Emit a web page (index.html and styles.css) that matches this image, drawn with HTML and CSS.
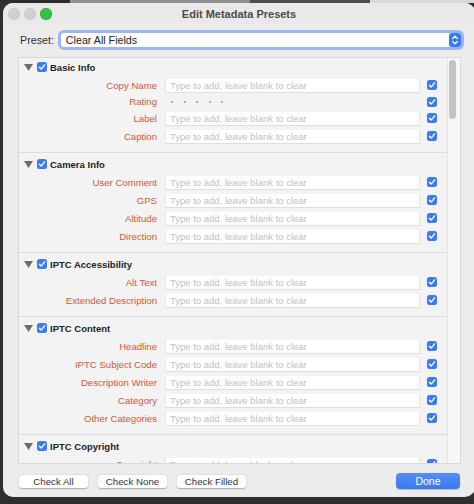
FILE: index.html
```html
<!DOCTYPE html>
<html>
<head>
<meta charset="utf-8">
<link rel="stylesheet" href="styles.css">
</head>
<body>
<div class="window">
  <div class="titlebar">
    <div class="lights"><span class="light"></span><span class="light"></span><span class="light green"></span></div>
    <div class="title">Edit Metadata Presets</div>
  </div>
  <div class="preset-row">
    <span class="preset-label">Preset:</span>
    <div class="select">
      <span class="select-text">Clear All Fields</span>
      <svg class="stepper" width="12" height="14" viewBox="0 0 12 14"><rect width="12" height="14" rx="3" fill="#3a7bf2"/><path d="M3.6 5.6 L6 3.2 L8.4 5.6 M3.6 8.4 L6 10.8 L8.4 8.4" fill="none" stroke="#fff" stroke-width="1.3" stroke-linecap="round" stroke-linejoin="round"/></svg>
    </div>
  </div>
  <div class="scrollview">
    <div class="sections">
      <div class="section first">
        <div class="sec-head"><svg class="tri" width="9" height="7" viewBox="0 0 9 7"><polygon points="0,0 9,0 4.5,7" fill="#6d6d6d"/></svg><svg class="cb" width="10" height="10" viewBox="0 0 10 10"><rect width="10" height="10" rx="2.5" fill="#3a7bf2"/><path d="M2.4 5.2 L4.2 7.1 L7.6 2.9" fill="none" stroke="#fff" stroke-width="1.4" stroke-linecap="round" stroke-linejoin="round"/></svg><span class="sec-title">Basic Info</span></div>
        <div class="row"><span class="lbl">Copy Name</span><input class="field" placeholder="Type to add, leave blank to clear"><svg class="cb" width="10" height="10" viewBox="0 0 10 10"><rect width="10" height="10" rx="2.5" fill="#3a7bf2"/><path d="M2.4 5.2 L4.2 7.1 L7.6 2.9" fill="none" stroke="#fff" stroke-width="1.4" stroke-linecap="round" stroke-linejoin="round"/></svg></div>
        <div class="row rating"><span class="lbl">Rating</span><div class="dots"><i></i><i></i><i></i><i></i><i></i></div><svg class="cb" width="10" height="10" viewBox="0 0 10 10"><rect width="10" height="10" rx="2.5" fill="#3a7bf2"/><path d="M2.4 5.2 L4.2 7.1 L7.6 2.9" fill="none" stroke="#fff" stroke-width="1.4" stroke-linecap="round" stroke-linejoin="round"/></svg></div>
        <div class="row"><span class="lbl">Label</span><input class="field" placeholder="Type to add, leave blank to clear"><svg class="cb" width="10" height="10" viewBox="0 0 10 10"><rect width="10" height="10" rx="2.5" fill="#3a7bf2"/><path d="M2.4 5.2 L4.2 7.1 L7.6 2.9" fill="none" stroke="#fff" stroke-width="1.4" stroke-linecap="round" stroke-linejoin="round"/></svg></div>
        <div class="row"><span class="lbl">Caption</span><input class="field" placeholder="Type to add, leave blank to clear"><svg class="cb" width="10" height="10" viewBox="0 0 10 10"><rect width="10" height="10" rx="2.5" fill="#3a7bf2"/><path d="M2.4 5.2 L4.2 7.1 L7.6 2.9" fill="none" stroke="#fff" stroke-width="1.4" stroke-linecap="round" stroke-linejoin="round"/></svg></div>
      </div>
      <div class="section">
        <div class="sec-head"><svg class="tri" width="9" height="7" viewBox="0 0 9 7"><polygon points="0,0 9,0 4.5,7" fill="#6d6d6d"/></svg><svg class="cb" width="10" height="10" viewBox="0 0 10 10"><rect width="10" height="10" rx="2.5" fill="#3a7bf2"/><path d="M2.4 5.2 L4.2 7.1 L7.6 2.9" fill="none" stroke="#fff" stroke-width="1.4" stroke-linecap="round" stroke-linejoin="round"/></svg><span class="sec-title">Camera Info</span></div>
        <div class="row"><span class="lbl">User Comment</span><input class="field" placeholder="Type to add, leave blank to clear"><svg class="cb" width="10" height="10" viewBox="0 0 10 10"><rect width="10" height="10" rx="2.5" fill="#3a7bf2"/><path d="M2.4 5.2 L4.2 7.1 L7.6 2.9" fill="none" stroke="#fff" stroke-width="1.4" stroke-linecap="round" stroke-linejoin="round"/></svg></div>
        <div class="row"><span class="lbl">GPS</span><input class="field" placeholder="Type to add, leave blank to clear"><svg class="cb" width="10" height="10" viewBox="0 0 10 10"><rect width="10" height="10" rx="2.5" fill="#3a7bf2"/><path d="M2.4 5.2 L4.2 7.1 L7.6 2.9" fill="none" stroke="#fff" stroke-width="1.4" stroke-linecap="round" stroke-linejoin="round"/></svg></div>
        <div class="row"><span class="lbl">Altitude</span><input class="field" placeholder="Type to add, leave blank to clear"><svg class="cb" width="10" height="10" viewBox="0 0 10 10"><rect width="10" height="10" rx="2.5" fill="#3a7bf2"/><path d="M2.4 5.2 L4.2 7.1 L7.6 2.9" fill="none" stroke="#fff" stroke-width="1.4" stroke-linecap="round" stroke-linejoin="round"/></svg></div>
        <div class="row"><span class="lbl">Direction</span><input class="field" placeholder="Type to add, leave blank to clear"><svg class="cb" width="10" height="10" viewBox="0 0 10 10"><rect width="10" height="10" rx="2.5" fill="#3a7bf2"/><path d="M2.4 5.2 L4.2 7.1 L7.6 2.9" fill="none" stroke="#fff" stroke-width="1.4" stroke-linecap="round" stroke-linejoin="round"/></svg></div>
      </div>
      <div class="section">
        <div class="sec-head"><svg class="tri" width="9" height="7" viewBox="0 0 9 7"><polygon points="0,0 9,0 4.5,7" fill="#6d6d6d"/></svg><svg class="cb" width="10" height="10" viewBox="0 0 10 10"><rect width="10" height="10" rx="2.5" fill="#3a7bf2"/><path d="M2.4 5.2 L4.2 7.1 L7.6 2.9" fill="none" stroke="#fff" stroke-width="1.4" stroke-linecap="round" stroke-linejoin="round"/></svg><span class="sec-title">IPTC Accessibility</span></div>
        <div class="row"><span class="lbl">Alt Text</span><input class="field" placeholder="Type to add, leave blank to clear"><svg class="cb" width="10" height="10" viewBox="0 0 10 10"><rect width="10" height="10" rx="2.5" fill="#3a7bf2"/><path d="M2.4 5.2 L4.2 7.1 L7.6 2.9" fill="none" stroke="#fff" stroke-width="1.4" stroke-linecap="round" stroke-linejoin="round"/></svg></div>
        <div class="row"><span class="lbl">Extended Description</span><input class="field" placeholder="Type to add, leave blank to clear"><svg class="cb" width="10" height="10" viewBox="0 0 10 10"><rect width="10" height="10" rx="2.5" fill="#3a7bf2"/><path d="M2.4 5.2 L4.2 7.1 L7.6 2.9" fill="none" stroke="#fff" stroke-width="1.4" stroke-linecap="round" stroke-linejoin="round"/></svg></div>
      </div>
      <div class="section">
        <div class="sec-head"><svg class="tri" width="9" height="7" viewBox="0 0 9 7"><polygon points="0,0 9,0 4.5,7" fill="#6d6d6d"/></svg><svg class="cb" width="10" height="10" viewBox="0 0 10 10"><rect width="10" height="10" rx="2.5" fill="#3a7bf2"/><path d="M2.4 5.2 L4.2 7.1 L7.6 2.9" fill="none" stroke="#fff" stroke-width="1.4" stroke-linecap="round" stroke-linejoin="round"/></svg><span class="sec-title">IPTC Content</span></div>
        <div class="row"><span class="lbl">Headline</span><input class="field" placeholder="Type to add, leave blank to clear"><svg class="cb" width="10" height="10" viewBox="0 0 10 10"><rect width="10" height="10" rx="2.5" fill="#3a7bf2"/><path d="M2.4 5.2 L4.2 7.1 L7.6 2.9" fill="none" stroke="#fff" stroke-width="1.4" stroke-linecap="round" stroke-linejoin="round"/></svg></div>
        <div class="row"><span class="lbl">IPTC Subject Code</span><input class="field" placeholder="Type to add, leave blank to clear"><svg class="cb" width="10" height="10" viewBox="0 0 10 10"><rect width="10" height="10" rx="2.5" fill="#3a7bf2"/><path d="M2.4 5.2 L4.2 7.1 L7.6 2.9" fill="none" stroke="#fff" stroke-width="1.4" stroke-linecap="round" stroke-linejoin="round"/></svg></div>
        <div class="row"><span class="lbl">Description Writer</span><input class="field" placeholder="Type to add, leave blank to clear"><svg class="cb" width="10" height="10" viewBox="0 0 10 10"><rect width="10" height="10" rx="2.5" fill="#3a7bf2"/><path d="M2.4 5.2 L4.2 7.1 L7.6 2.9" fill="none" stroke="#fff" stroke-width="1.4" stroke-linecap="round" stroke-linejoin="round"/></svg></div>
        <div class="row"><span class="lbl">Category</span><input class="field" placeholder="Type to add, leave blank to clear"><svg class="cb" width="10" height="10" viewBox="0 0 10 10"><rect width="10" height="10" rx="2.5" fill="#3a7bf2"/><path d="M2.4 5.2 L4.2 7.1 L7.6 2.9" fill="none" stroke="#fff" stroke-width="1.4" stroke-linecap="round" stroke-linejoin="round"/></svg></div>
        <div class="row"><span class="lbl">Other Categories</span><input class="field" placeholder="Type to add, leave blank to clear"><svg class="cb" width="10" height="10" viewBox="0 0 10 10"><rect width="10" height="10" rx="2.5" fill="#3a7bf2"/><path d="M2.4 5.2 L4.2 7.1 L7.6 2.9" fill="none" stroke="#fff" stroke-width="1.4" stroke-linecap="round" stroke-linejoin="round"/></svg></div>
      </div>
      <div class="section">
        <div class="sec-head"><svg class="tri" width="9" height="7" viewBox="0 0 9 7"><polygon points="0,0 9,0 4.5,7" fill="#6d6d6d"/></svg><svg class="cb" width="10" height="10" viewBox="0 0 10 10"><rect width="10" height="10" rx="2.5" fill="#3a7bf2"/><path d="M2.4 5.2 L4.2 7.1 L7.6 2.9" fill="none" stroke="#fff" stroke-width="1.4" stroke-linecap="round" stroke-linejoin="round"/></svg><span class="sec-title">IPTC Copyright</span></div>
        <div class="row"><span class="lbl">Copyright</span><input class="field" placeholder="Type to add, leave blank to clear"><svg class="cb" width="10" height="10" viewBox="0 0 10 10"><rect width="10" height="10" rx="2.5" fill="#3a7bf2"/><path d="M2.4 5.2 L4.2 7.1 L7.6 2.9" fill="none" stroke="#fff" stroke-width="1.4" stroke-linecap="round" stroke-linejoin="round"/></svg></div>
      </div>
    </div>
    <div class="track"><div class="thumb"></div></div>
  </div>
  <div class="footer">
    <button class="btn">Check All</button>
    <button class="btn">Check None</button>
    <button class="btn">Check Filled</button>
    <span class="spacer"></span>
    <button class="btn done">Done</button>
  </div>
</div>
</body>
</html>
```
FILE: styles.css
```css
html, body {
  margin: 0;
  padding: 0;
}
body {
  width: 474px;
  height: 504px;
  overflow: hidden;
  background-color: #2f2f2f;
  background-image: linear-gradient(to right, #2c2c2c 0 70px, #8e8e8e 70px 250px, #4e4e4e 250px 370px, #d9d9d9 370px);
  background-size: 100% 3px;
  background-repeat: no-repeat;
  font-family: "Liberation Sans", Arial, sans-serif;
}
.window {
  margin: 3px 0 0 3px;
  width: 472px;
  height: 494px;
  background: #ececec;
  border-radius: 10px;
  overflow: hidden;
  display: flex;
  flex-direction: column;
}
.titlebar {
  height: 21px;
  flex: none;
  display: flex;
  align-items: center;
  position: relative;
  background: #e9e9e9;
}
.lights {
  display: flex;
  gap: 4px;
  padding-left: 5px;
}
.light {
  width: 12px;
  height: 12px;
  border-radius: 50%;
  background: #d1d1d1;
  box-shadow: inset 0 0 0 0.5px #c2c2c2;
}
.light.green {
  background: #34c248;
  box-shadow: inset 0 0 0 0.5px #2aa83c;
}
.title {
  position: absolute;
  left: 0;
  right: 0;
  text-align: center;
  font-size: 11px;
  font-weight: bold;
  color: #4b4b4b;
  pointer-events: none;
}
.preset-row {
  flex: none;
  margin-top: 6px;
  height: 20px;
  display: flex;
  align-items: center;
  padding-left: 17px;
  gap: 4px;
}
.preset-label {
  font-size: 10.7px;
  color: #333;
}
.select {
  width: 395px;
  height: 14px;
  border: 3px solid #9fb4ef;
  border-radius: 6px;
  background: #fff;
  display: flex;
  align-items: center;
  justify-content: space-between;
  padding: 0 0 0 5px;
}
.select-text {
  font-size: 10.7px;
  color: #222;
}
.stepper {
  display: block;
  margin-right: 0px;
}
.scrollview {
  flex: none;
  margin: 7px 0 0 15px;
  width: 441px;
  height: 405px;
  border: 1px solid #dadada;
  background: #f3f3f3;
  display: flex;
  overflow: hidden;
}
.sections {
  width: 428px;
  flex: none;
  overflow: hidden;
}
.track {
  flex: 1;
  background: #f7f7f7;
  border-left: 1px solid #e4e4e4;
  padding: 2px 0 0 1px;
}
.thumb {
  width: 7px;
  height: 59px;
  border-radius: 4px;
  background: #c3c3c3;
}
.section {
  border-top: 1px solid #dcdcdc;
  padding: 2px 0 7px;
}
.section.first {
  border-top: none;
  padding-top: 0;
}
.sec-head {
  height: 18px;
  display: flex;
  align-items: center;
  padding-left: 5px;
}
.tri {
  display: block;
  margin-right: 4px;
}
.sec-head .cb {
  margin-right: 3px;
}
.cb {
  display: block;
  flex: none;
}
.sec-title {
  font-size: 9.5px;
  font-weight: bold;
  color: #1d1d1d;
}
.row {
  height: 18px;
  display: flex;
  align-items: center;
}
.row.rating {
  height: 15px;
}
.lbl {
  width: 138px;
  flex: none;
  text-align: right;
  font-size: 9.6px;
  color: #c85a42;
  white-space: nowrap;
}
.field {
  margin: 0 0 0 9px;
  width: 253px;
  height: 13px;
  box-sizing: border-box;
  flex: none;
  border: none;
  outline: none;
  background: #fff;
  box-shadow: 0 0.5px 0 0.5px #dedede;
  padding: 0 4px;
  font-family: "Liberation Sans", Arial, sans-serif;
  font-size: 9.5px;
  color: #333;
}
.field::placeholder {
  color: #bfbfbf;
}
.row .cb {
  margin-left: 8px;
}
.dots {
  margin-left: 14px;
  width: 248px;
  display: flex;
  gap: 10.5px;
  align-items: center;
}
.dots i {
  width: 2px;
  height: 2px;
  border-radius: 50%;
  background: #9a9a9a;
}
.footer {
  flex: none;
  margin-top: 9px;
  height: 16px;
  display: flex;
  align-items: center;
  padding: 0 15px 0 16px;
  gap: 10px;
}
.btn {
  width: 69px;
  height: 13px;
  padding: 0;
  border: none;
  border-radius: 3px;
  background: #fff;
  box-shadow: 0 0.5px 1.5px rgba(0,0,0,0.28);
  font-family: "Liberation Sans", Arial, sans-serif;
  font-size: 9.7px;
  color: #333;
  line-height: 13px;
}
.spacer {
  flex: 1;
}
.btn.done {
  width: 64px;
  height: 16px;
  border-radius: 4px;
  background: linear-gradient(#5590f6, #3a78f0);
  box-shadow: 0 0.5px 1px rgba(0,0,0,0.2);
  color: #fff;
  font-size: 10.5px;
  line-height: 16px;
}
```
